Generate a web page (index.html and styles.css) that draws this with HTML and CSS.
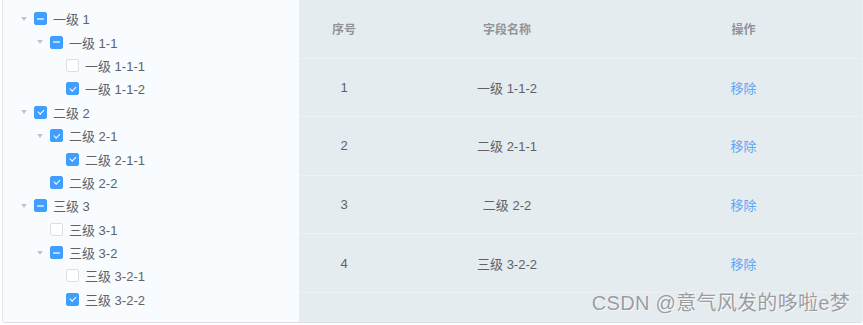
FILE: index.html
```html
<!DOCTYPE html>
<html lang="zh">
<head>
  <meta charset="UTF-8">
  <title>树形选择</title>
  <link rel="stylesheet" href="styles.css">
</head>
<body>
  <div class="wrap">
    <div class="tree">
      <div class="node lv1"><span class="caret"></span><span class="cb half"></span><span class="label">一级 1</span></div>
      <div class="node lv2"><span class="caret"></span><span class="cb half"></span><span class="label">一级 1-1</span></div>
      <div class="node lv3"><span class="caret none"></span><span class="cb"></span><span class="label">一级 1-1-1</span></div>
      <div class="node lv3"><span class="caret none"></span><span class="cb on"></span><span class="label">一级 1-1-2</span></div>
      <div class="node lv1"><span class="caret"></span><span class="cb on"></span><span class="label">二级 2</span></div>
      <div class="node lv2"><span class="caret"></span><span class="cb on"></span><span class="label">二级 2-1</span></div>
      <div class="node lv3"><span class="caret none"></span><span class="cb on"></span><span class="label">二级 2-1-1</span></div>
      <div class="node lv2"><span class="caret none"></span><span class="cb on"></span><span class="label">二级 2-2</span></div>
      <div class="node lv1"><span class="caret"></span><span class="cb half"></span><span class="label">三级 3</span></div>
      <div class="node lv2"><span class="caret none"></span><span class="cb"></span><span class="label">三级 3-1</span></div>
      <div class="node lv2"><span class="caret"></span><span class="cb half"></span><span class="label">三级 3-2</span></div>
      <div class="node lv3"><span class="caret none"></span><span class="cb"></span><span class="label">三级 3-2-1</span></div>
      <div class="node lv3"><span class="caret none"></span><span class="cb on"></span><span class="label">三级 3-2-2</span></div>
    </div>

    <div class="table-box">
      <div class="row head">
        <div class="c1">序号</div>
        <div class="c2">字段名称</div>
        <div class="c3">操作</div>
      </div>
      <div class="row">
        <div class="c1">1</div>
        <div class="c2">一级 1-1-2</div>
        <div class="c3"><a class="link">移除</a></div>
      </div>
      <div class="row">
        <div class="c1">2</div>
        <div class="c2">二级 2-1-1</div>
        <div class="c3"><a class="link">移除</a></div>
      </div>
      <div class="row">
        <div class="c1">3</div>
        <div class="c2">二级 2-2</div>
        <div class="c3"><a class="link">移除</a></div>
      </div>
      <div class="row">
        <div class="c1">4</div>
        <div class="c2">三级 3-2-2</div>
        <div class="c3"><a class="link">移除</a></div>
      </div>
      <div class="mark">CSDN @意气风发的哆啦e梦</div>
    </div>
  </div>
</body>
</html>
```

FILE: styles.css
```css
body {
    margin: 0;
    background: #fff;
    font-family: "Liberation Sans", "Noto Sans CJK SC", sans-serif;
    font-size: 13px;
    color: #606266;
}
.wrap {
    display: flex;
    margin-left: 2px;
    width: 859px;
    height: 322px;
    border-left: 1px solid #e4e7ed;
    border-bottom: 1px solid #dcdfe6;
    border-right: 1px solid #e9eef2;
    border-radius: 0 0 3px 3px;
    overflow: hidden;
}
.tree {
    width: 296px;
    background: #f8fcff;
    padding-top: 7px;
    box-sizing: border-box;
}
.node {
    display: flex;
    align-items: center;
    height: 23.4px;
}
.lv1 { padding-left: 15px; }
.lv2 { padding-left: 31px; }
.lv3 { padding-left: 47px; }
.caret {
    width: 12px;
    height: 12px;
    position: relative;
}
.caret::after {
    content: "";
    position: absolute;
    left: 3px;
    top: 4px;
    border-left: 3.5px solid transparent;
    border-right: 3.5px solid transparent;
    border-top: 4px solid #c0c4cc;
}
.caret.none::after { display: none; }
.cb {
    width: 11px;
    height: 11px;
    margin-left: 4px;
    border: 1px solid #dcdfe6;
    border-radius: 2px;
    background: #fff;
    position: relative;
}
.cb.on, .cb.half {
    background: #409eff;
    border-color: #409eff;
}
.cb.half::after {
    content: "";
    position: absolute;
    left: 2px;
    right: 2px;
    top: 4.5px;
    height: 2px;
    background: #fff;
    transform: scaleY(0.6);
}
.cb.on::after {
    content: "";
    position: absolute;
    left: 3.5px;
    top: 1.5px;
    width: 2.5px;
    height: 5px;
    border: 1px solid #fff;
    border-left: 0;
    border-top: 0;
    transform: rotate(45deg);
}
.label {
    margin-left: 6px;
    color: #606266;
}
.table-box {
    flex: 1;
    background: #e5ecf0;
    position: relative;
}
.row {
    display: flex;
    height: 58.6px;
    align-items: center;
    border-bottom: 1px solid #edf1f5;
    box-sizing: border-box;
    text-align: center;
}
.row.head {
    color: #909399;
    font-weight: bold;
    font-size: 12px;
}
.c1 { width: 90px; }
.c2 { width: 236px; }
.c3 { flex: 1; }
.link {
    color: #5ea6f6;
    cursor: pointer;
}
.mark {
    position: absolute;
    right: 12px;
    bottom: 6px;
    font-size: 20px;
    letter-spacing: 0.3px;
    color: #9a9c9e;
    text-shadow: 0 0 1px #fff, 1px 1px 0 #f4f6f8;
}
```
